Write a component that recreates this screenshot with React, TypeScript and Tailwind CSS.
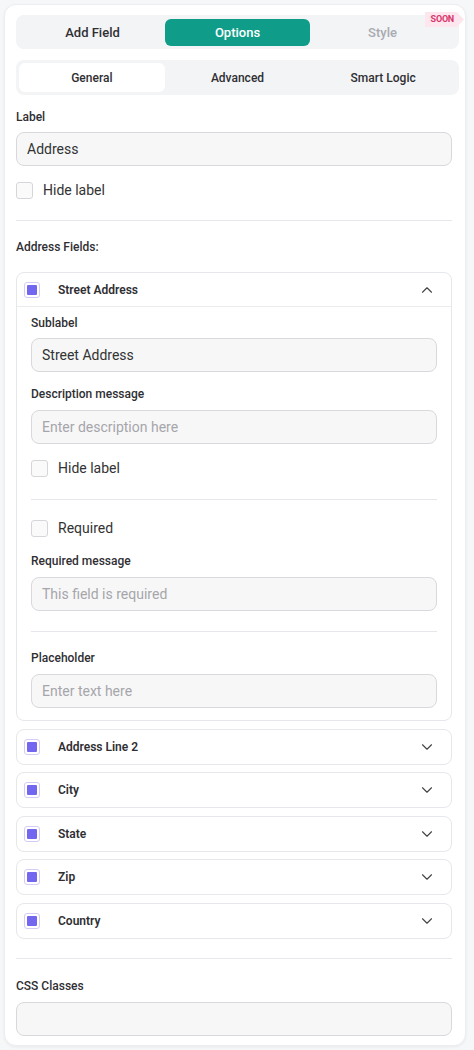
import { ChevronDown, ChevronUp } from 'lucide-react'

const font = { fontFamily: 'Roboto, "Liberation Sans", sans-serif' }

const SUBFIELDS = ['Address Line 2', 'City', 'State', 'Zip', 'Country']

function FieldLabel({ children }: { children: React.ReactNode }) {
  return <div className="text-[12px] leading-4 font-medium text-[#2f2f33]">{children}</div>
}

function TextInput({ value, placeholder }: { value?: string; placeholder?: string }) {
  return (
    <input
      readOnly
      value={value ?? ''}
      placeholder={placeholder}
      className="block w-full h-[34px] px-[10px] bg-[#f7f7f8] border border-[#d9d9dd] rounded-lg text-[14px] text-[#333] placeholder:text-[#a6a6aa] focus:outline-none"
    />
  )
}

function Check({ label }: { label: string }) {
  return (
    <label className="flex items-center gap-[10px] h-[17px]">
      <span className="w-[17px] h-[17px] rounded-[3px] border border-[#d6d6da] bg-[#fafafa]" />
      <span className="text-[14px] leading-[17px] text-[#333]">{label}</span>
    </label>
  )
}

function PurpleBox() {
  return (
    <span className="w-4 h-4 rounded-[3px] border border-[#d3cdf6] bg-white p-[2px] flex">
      <span className="flex-1 rounded-[1px] bg-[#7467ef]" />
    </span>
  )
}

function SubHeader({ title, open }: { title: string; open?: boolean }) {
  return (
    <div className={`h-[34px] flex items-center pl-[7px] pr-[15px] ${open ? 'border-b border-[#ececef]' : ''}`}>
      <PurpleBox />
      <span className="ml-[18px] flex-1 text-[12px] font-semibold text-[#2f2f33]">{title}</span>
      {open
        ? <ChevronUp size={18} strokeWidth={1.5} className="text-[#444]" />
        : <ChevronDown size={18} strokeWidth={1.5} className="text-[#444]" />}
    </div>
  )
}

export default function App() {
  return (
    <div style={font} className="min-h-[1050px] bg-[#f6f7f9] pt-[4px] px-[4px] pb-[5px]">
      <div className="w-[462px] bg-white border border-[#eceef2] rounded-xl shadow-[0_1px_3px_rgba(0,0,0,0.06)] pl-[11px] pr-[6px] pt-[10px] pb-[9px]">

        {/* Main tabs */}
        <div className="relative grid grid-cols-3 h-[34px] p-1 pb-[3px] bg-[#f3f4f6] rounded-lg">
          <button className="text-[13px] font-medium text-[#2f2f33]">Add Field</button>
          <button className="text-[13px] font-medium text-white bg-[#0f9d8a] rounded-md">Options</button>
          <button className="text-[13px] font-medium text-[#a9abb1]">Style</button>
          <span className="absolute -top-[3px] -right-[5px] h-[15px] pl-[6px] pr-[10px] flex items-center bg-[#fde6ee] text-[#d8356b] text-[9px] font-bold tracking-tight [clip-path:polygon(0_0,82%_0,100%_50%,82%_100%,0_100%)]">
            SOON
          </span>
        </div>

        {/* Sub tabs */}
        <div className="mt-[11px] grid grid-cols-3 h-[35px] p-[3px] bg-[#f3f4f6] rounded-lg">
          <button className="text-[12px] font-medium text-[#2f2f33] bg-white rounded-md">General</button>
          <button className="text-[12px] font-medium text-[#2f2f33]">Advanced</button>
          <button className="text-[12px] font-medium text-[#2f2f33]">Smart Logic</button>
        </div>

        <div className="pr-[7px]">
          <div className="mt-[14px]">
            <FieldLabel>Label</FieldLabel>
            <div className="mt-[7px]"><TextInput value="Address" /></div>
          </div>

          <div className="mt-4"><Check label="Hide label" /></div>

          <div className="mt-[21px] border-t border-[#e6e7ea]" />

          <div className="mt-[18px]"><FieldLabel>Address Fields:</FieldLabel></div>

          <div className="mt-[17px] flex flex-col gap-[7.5px]">
            {/* Street Address (expanded) */}
            <div className="border border-[#e6e7ea] rounded-lg">
              <SubHeader title="Street Address" open />
              <div className="px-[14px] pt-2 pb-[12px]">
                <FieldLabel>Sublabel</FieldLabel>
                <div className="mt-[7px]"><TextInput value="Street Address" /></div>

                <div className="mt-[14px]"><FieldLabel>Description message</FieldLabel></div>
                <div className="mt-[8px]"><TextInput placeholder="Enter description here" /></div>

                <div className="mt-[16px]"><Check label="Hide label" /></div>

                <div className="mt-[22px] border-t border-[#e6e7ea]" />

                <div className="mt-[20px]"><Check label="Required" /></div>

                <div className="mt-[16px]"><FieldLabel>Required message</FieldLabel></div>
                <div className="mt-[8px]"><TextInput placeholder="This field is required" /></div>

                <div className="mt-[20px] border-t border-[#e6e7ea]" />

                <div className="mt-[18px]"><FieldLabel>Placeholder</FieldLabel></div>
                <div className="mt-[8px]"><TextInput placeholder="Enter text here" /></div>
              </div>
            </div>

            {SUBFIELDS.map(f => (
              <div key={f} className="border border-[#e6e7ea] rounded-lg">
                <SubHeader title={f} />
              </div>
            ))}
          </div>

          <div className="mt-[19px] border-t border-[#e6e7ea]" />

          <div className="mt-[19px]"><FieldLabel>CSS Classes</FieldLabel></div>
          <div className="mt-[8px]"><TextInput /></div>
        </div>
      </div>
    </div>
  )
}
